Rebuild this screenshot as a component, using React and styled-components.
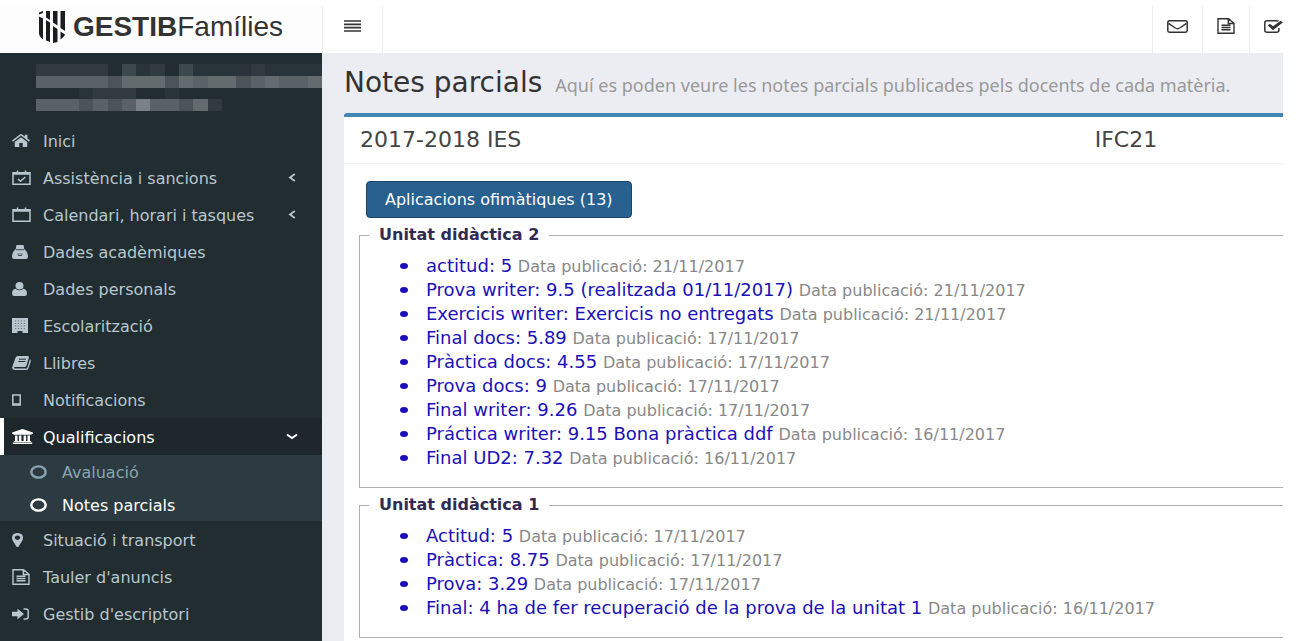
import React from "react";
import styled, { createGlobalStyle } from "styled-components";

const obscuredRows = [
  [2, 2, 2, 2, 2, 0, 3, 1, 2, 0, 3, 1, 1, 1, 1, 2, 1, 1, 1, 1],
  [5, 5, 5, 5, 5, 4, 6, 6, 6, 4, 6, 5, 6, 6, 4, 5, 6, 5, 5, 6],
  [0, 0, 0, 1, 2, 2, 2, 0, 0, 1, 0, 0, 0, 0, 0, 0, 0, 0, 0, 0],
  [5, 5, 5, 4, 5, 4, 5, 7, 5, 5, 4, 6, 2, 0, 0, 0, 0, 0, 0, 0],
];
const shades = [
  "#222d32",
  "#29343a",
  "#303a3f",
  "#3c484d",
  "#4a5459",
  "#596266",
  "#636b6e",
  "#7a8285",
];

const menuItems = [
  { label: "Inici", icon: "home" },
  { label: "Assistència i sancions", icon: "calendarCheck", arrow: "left" },
  { label: "Calendari, horari i tasques", icon: "calendar", arrow: "left" },
  { label: "Dades acadèmiques", icon: "student" },
  { label: "Dades personals", icon: "user" },
  { label: "Escolarització", icon: "building" },
  { label: "Llibres", icon: "book" },
  { label: "Notificacions", icon: "phone" },
  {
    label: "Qualificacions",
    icon: "bank",
    arrow: "down",
    active: true,
    children: [
      { label: "Avaluació" },
      { label: "Notes parcials", active: true },
    ],
  },
  { label: "Situació i transport", icon: "marker" },
  { label: "Tauler d'anuncis", icon: "file" },
  { label: "Gestib d'escriptori", icon: "signIn" },
];

const units = [
  {
    title: "Unitat didàctica 2",
    marks: [
      ["actitud: 5", "21/11/2017"],
      ["Prova writer: 9.5 (realitzada 01/11/2017)", "21/11/2017"],
      ["Exercicis writer: Exercicis no entregats", "21/11/2017"],
      ["Final docs: 5.89", "17/11/2017"],
      ["Pràctica docs: 4.55", "17/11/2017"],
      ["Prova docs: 9", "17/11/2017"],
      ["Final writer: 9.26", "17/11/2017"],
      ["Práctica writer: 9.15 Bona pràctica ddf", "16/11/2017"],
      ["Final UD2: 7.32", "16/11/2017"],
    ],
  },
  {
    title: "Unitat didàctica 1",
    marks: [
      ["Actitud: 5", "17/11/2017"],
      ["Pràctica: 8.75", "17/11/2017"],
      ["Prova: 3.29", "17/11/2017"],
      ["Final: 4 ha de fer recuperació de la prova de la unitat 1", "16/11/2017"],
    ],
  },
];

// each entry: [width, height, drawing]
const icons = {
  home: [
    18,
    13,
    <>
      <path d="M9 3.2 15.3 8v4.2q0 .8-.8.8h-3.8V9H7.3v4H3.5q-.8 0-.8-.8V8z" />
      <path d="M9 0q.6 0 1.100.4L12.800 2.500V.8h2.600v3.700L18 6.600l-.9 1.100L9 1.600.9 7.700 0 6.600 7.900.4Q8.400 0 9 0z" />
    </>,
  ],
  calendarCheck: [
    19,
    15,
    <>
      <path
        d="M1 2.800h17v11.400H1zM1 4h17M5.500.5v3.400M13.500.5v3.400"
        fill="none"
        stroke="currentColor"
        strokeWidth="1.500"
      />
      <path
        d="m6 9 2.500 2.200 4.800-4.200"
        fill="none"
        stroke="currentColor"
        strokeWidth="1.500"
      />
    </>,
  ],
  calendar: [
    19,
    15,
    <path
      d="M1 2.800h17v11.400H1zM1 4h17M5.500.5v3.400M13.500.5v3.400"
      fill="none"
      stroke="currentColor"
      strokeWidth="1.500"
    />,
  ],
  student: [
    16,
    14,
    <>
      <path d="M4.500 0h7l.9 4.400 1 .6q2.600 3 2.600 6.500 0 2.500-2 2.500H2q-2 0-2-2.500Q0 8 2.600 5l1-.6z" />
      <path
        d="M4 4.700h8M5.500 9h2M8.500 9h2M6 10.500h4"
        stroke="#222d32"
        strokeWidth="1"
        opacity=".8"
      />
    </>,
  ],
  user: [
    15,
    14,
    <>
      <ellipse cx="7.500" cy="3.800" rx="4" ry="3.800" />
      <path d="M3.600 6.800q3.900 3 7.800 0Q15 7.500 15 11.500 15 14 12.600 14H2.400Q0 14 0 11.500 0 7.500 3.600 6.800z" />
    </>,
  ],
  building: [
    16,
    15,
    <>
      <path d="M0 0h16v15h-5.500v-2h-5v2H0z" />
      <path
        d="M3 3h10M3 5.500h10M3 8h10M3 10.500h10"
        stroke="#222d32"
        strokeDasharray="1.200 1.700"
        opacity=".5"
      />
    </>,
  ],
  book: [
    19,
    14,
    <>
      <path d="M5.800 0h10q1.400.2 1 1.700l-2.500 8.300q-.4 1-1.600 1H2.800q-1 .2-.8.900.3.700 1.400.7h10.800q.7 0 1-.7L18 3.300q1.200.7.800 1.900l-2.400 7.400q-.5 1.400-2 1.400H3.200Q.4 14 .1 11.500L3.500 1.800Q4.100 0 5.800 0z" />
      <path d="M7 3.200h7M6.300 5.500h7" stroke="#222d32" strokeWidth="1" />
    </>,
  ],
  phone: [
    9,
    12,
    <path
      d="M.8 1h7.400v10H.8zM.8 10h7.400"
      fill="none"
      stroke="currentColor"
      strokeWidth="1.500"
    />,
  ],
  bank: [
    21,
    15,
    <path d="M10.500 0 21 3.500V5h-1.500v.8h-18V5H0V3.500zM3 6.500h2.500V12h1.400V6.500h2.500V12h2.200V6.500h2.500V12h1.400V6.500H18V12h1.200v1H1.800v-1H3zM.8 13.500h19.400V15H.8z" />,
  ],
  marker: [
    11,
    14,
    <path
      d="M5.500 0Q11 .3 11 4.900q0 1.300-.8 2.800L6.600 13.400q-1.100 1-2.200 0L.8 7.700Q0 6.200 0 4.900 0 .3 5.500 0zm0 2.400a2.700 2.300 0 1 0 .01 0z"
      fillRule="evenodd"
    />,
  ],
  file: [
    18,
    16,
    <path
      d="M1 .8h10.500L17 5.300v9.900H1zM11.300.8v4.700H17M4.500 7.200h9M4.500 9.500h9M4.500 11.800h9"
      fill="none"
      stroke="currentColor"
      strokeWidth="1.400"
    />,
  ],
  signIn: [
    17,
    12,
    <>
      <path d="M0 3.700h5.500V.8L12 6l-6.500 5.200V8.300H0z" />
      <path
        d="M11.500 1h2.300q2.400 0 2.400 2v6q0 2-2.400 2h-2.300"
        fill="none"
        stroke="currentColor"
        strokeWidth="1.500"
      />
    </>,
  ],
  circle: [
    17,
    14,
    <ellipse
      cx="8.500"
      cy="7"
      rx="7.200"
      ry="5.600"
      fill="none"
      stroke="currentColor"
      strokeWidth="2.400"
    />,
  ],
  left: [
    8,
    9,
    <path
      d="M6.800 1 2 4.500 6.800 8"
      fill="none"
      stroke="currentColor"
      strokeWidth="1.800"
    />,
  ],
  down: [
    12,
    7,
    <path
      d="m1 1.500 5 3.600 5-3.600"
      fill="none"
      stroke="currentColor"
      strokeWidth="1.800"
    />,
  ],
  bars: [
    17,
    12,
    <path
      d="M0 1h17M0 4.300h17M0 7.600h17M0 11h17"
      stroke="currentColor"
      strokeWidth="1.700"
    />,
  ],
  envelope: [
    21,
    13,
    <>
      <rect
        x=".8"
        y=".8"
        width="19.400"
        height="11.400"
        rx="1.600"
        fill="none"
        stroke="currentColor"
        strokeWidth="1.500"
      />
      <path
        d="m1.500 3.300 6.800 4.700q2.200 1.400 4.400 0l6.800-4.700"
        fill="none"
        stroke="currentColor"
        strokeWidth="1.400"
      />
    </>,
  ],
  check: [
    19,
    13,
    <>
      <path
        d="M14.500 1.300Q14 .8 12.500.8H3.200Q.8.800.8 2.800v7.400q0 2 2.400 2h9.300q2.400 0 2.400-2V8"
        fill="none"
        stroke="currentColor"
        strokeWidth="1.500"
      />
      <path d="m3.800 5.500 2-1.800 3.200 2.600L16.600.8l2.200 1.800-9.800 7.600z" />
    </>,
  ],
};

const Icon = ({ name }) => {
  const [width, height, drawing] = icons[name];
  return (
    <IconSvg
      width={width}
      height={height}
      viewBox={`0 0 ${width} ${height}`}
      aria-hidden="true"
    >
      {drawing}
    </IconSvg>
  );
};

const Logo = () => (
  <svg width="26" height="32" viewBox="0 0 26 32" aria-hidden="true">
    <g fill="#1d1d1f">
      <path d="M0 1.500 4 0v2L0 3.500zM0 5.500l4 2v21q-4-3-4-6.500z" />
      <path d="M7 0h4v9L7 6.500zM7 9l4 2.500V31l-4-1.500z" />
      <path d="M14 0h4.500v14.500L14 11.500zM14 15l4.500 3v13L14 32z" />
      <path d="M21.500 0H26v20l-4.500-3zM21.500 20.500 26 23.500q-.5 2-4.500 5z" />
    </g>
  </svg>
);

const ObscuredName = () => (
  <svg
    width="286"
    height="47"
    viewBox="0 0 20 4"
    preserveAspectRatio="none"
    shapeRendering="crispEdges"
    aria-hidden="true"
  >
    {obscuredRows.map((row, y) =>
      row.map((shade, x) => (
        <rect
          key={`${x}-${y}`}
          x={x}
          y={y}
          width="1"
          height="1"
          fill={shades[shade]}
        />
      ))
    )}
  </svg>
);

const App = () => {
  return (
    <>
      <GlobalStyle />
      <Page>
        <Header>
          <Brand href="#">
            <Logo />
            <BrandName>
              <b>GESTIB</b>Famílies
            </BrandName>
          </Brand>
          <ToggleButton type="button" aria-label="Menú">
            <Icon name="bars" />
          </ToggleButton>
          <HeaderTools>
            <ToolButton type="button" aria-label="Missatges">
              <Icon name="envelope" />
            </ToolButton>
            <ToolButton type="button" aria-label="Documents">
              <Icon name="file" />
            </ToolButton>
            <ToolButton type="button" aria-label="Tasques">
              <Icon name="check" />
            </ToolButton>
          </HeaderTools>
        </Header>
        <Body>
          <Sidebar>
            <UserPanel>
              <ObscuredName />
            </UserPanel>
            <ul>
              {menuItems.map((item) => (
                <li key={item.label}>
                  <MenuLink href="#" $active={item.active}>
                    <IconSlot>
                      <Icon name={item.icon} />
                    </IconSlot>
                    <MenuLabel>{item.label}</MenuLabel>
                    {item.arrow && (
                      <ArrowSlot>
                        <Icon name={item.arrow} />
                      </ArrowSlot>
                    )}
                  </MenuLink>
                  {item.children && (
                    <SubMenu>
                      {item.children.map((child) => (
                        <li key={child.label}>
                          <SubMenuLink href="#" $active={child.active}>
                            <Icon name="circle" />
                            <MenuLabel>{child.label}</MenuLabel>
                          </SubMenuLink>
                        </li>
                      ))}
                    </SubMenu>
                  )}
                </li>
              ))}
            </ul>
          </Sidebar>
          <Content>
            <ContentHeader>
              <PageTitle>Notes parcials</PageTitle>
              <PageSummary>
                Aquí es poden veure les notes parcials publicades pels docents
                de cada matèria.
              </PageSummary>
            </ContentHeader>
            <Box>
              <BoxTitle>
                <School>2017-2018 IES</School>
                <span>IFC21</span>
              </BoxTitle>
              <BoxBody>
                <SubjectButton type="button">
                  Aplicacions ofimàtiques (13)
                </SubjectButton>
                {units.map((unit) => (
                  <Unit key={unit.title}>
                    <UnitTitle>{unit.title}</UnitTitle>
                    <MarkList>
                      {unit.marks.map(([mark, date]) => (
                        <Mark key={mark}>
                          {mark} <MarkDate>Data publicació: {date}</MarkDate>
                        </Mark>
                      ))}
                    </MarkList>
                  </Unit>
                ))}
              </BoxBody>
            </Box>
          </Content>
        </Body>
      </Page>
    </>
  );
};

const GlobalStyle = createGlobalStyle`
  * {
    box-sizing: border-box;
  }

  body {
    margin: 0;
    background-color: #ffffff;
    font-family: "DejaVu Sans", "Noto Sans", sans-serif;
    font-size: 16px;
    line-height: 24px;
  }

  ul {
    margin: 0;
    padding: 0;
    list-style: none;
  }

  a {
    text-decoration: none;
  }
`;

const Page = styled.div`
  display: flex;
  flex-direction: column;
  height: 100vh;
  padding-top: 6px;
  padding-right: 18px;
  overflow: hidden;
`;

const IconSvg = styled.svg`
  display: block;
  flex-shrink: 0;
  fill: currentColor;
`;

const Header = styled.header`
  display: flex;
  flex-shrink: 0;
  height: 47px;
  color: #333333;
`;

const Brand = styled.a`
  display: flex;
  align-items: center;
  justify-content: center;
  gap: 8px;
  width: 322px;
  padding-bottom: 6px;
  background-color: #fdfdfd;
  color: #333333;
`;

const BrandName = styled.span`
  font-family: "Liberation Sans", Arial, sans-serif;
  font-size: 28px;
  line-height: 32px;
`;

const ToggleButton = styled.button`
  width: 61px;
  padding: 0 0 7px 21px;
  border: 1px solid #eeeeee;
  border-width: 0 1px;
  background-color: #ffffff;
  color: #333333;
`;

const HeaderTools = styled.div`
  display: flex;
  margin-left: auto;
`;

const ToolButton = styled.button`
  padding: 0 14px 7px;
  border: 0;
  border-left: 1px solid #eeeeee;
  background-color: #ffffff;
  color: #333333;

  &:last-child {
    padding-right: 0;
  }
`;

const Body = styled.div`
  display: flex;
  flex: 1;
  min-height: 0;
`;

const Sidebar = styled.aside`
  flex-shrink: 0;
  width: 322px;
  background-color: #222d32;
`;

const UserPanel = styled.div`
  height: 69px;
  padding: 11px 0 0 36px;
`;

const MenuLink = styled.a`
  display: flex;
  align-items: center;
  height: 37px;
  padding: 0 24px 0 8px;
  border-left: 4px solid ${(props) => (props.$active ? "#ffffff" : "#222d32")};
  background-color: ${(props) => (props.$active ? "#1e282c" : "#222d32")};
  color: ${(props) => (props.$active ? "#ffffff" : "#b8c7ce")};
`;

const IconSlot = styled.span`
  width: 31px;
`;

const MenuLabel = styled.span`
  flex: 1;
  padding-top: 2px;
`;

const ArrowSlot = styled.span`
  display: flex;
  justify-content: center;
  width: 12px;
`;

const SubMenu = styled.ul`
  background-color: #2c3b41;
`;

const SubMenuLink = styled.a`
  display: flex;
  align-items: center;
  gap: 15px;
  height: 33px;
  padding-left: 30px;
  color: ${(props) => (props.$active ? "#ffffff" : "#8aa4af")};
`;

const Content = styled.main`
  flex: 1;
  display: flex;
  flex-direction: column;
  min-width: 0;
  padding-left: 22px;
  background-color: #ecedf3;
`;

const ContentHeader = styled.div`
  display: flex;
  align-items: baseline;
  gap: 13px;
  padding: 14px 0;
  white-space: nowrap;
`;

const PageTitle = styled.h1`
  margin: 0;
  font-size: 28px;
  font-weight: 400;
  line-height: 32px;
  color: #333333;
`;

const PageSummary = styled.small`
  font-family: "Noto Sans", sans-serif;
  font-size: 18px;
  color: #999999;
`;

const Box = styled.section`
  flex: 1;
  border-top: 4px solid #4088b0;
  border-radius: 3px 0 0 0;
  background-color: #ffffff;
`;

const BoxTitle = styled.h2`
  display: flex;
  margin: 0;
  padding: 11px 16px 11px;
  border-bottom: 1px solid #f4f4f4;
  font-size: 22px;
  font-weight: 400;
  color: #444444;
`;

/* the name of the school is blanked out, only its room is kept */
const School = styled.span`
  flex-basis: 81%;
`;

const BoxBody = styled.div`
  padding: 17px 0 0 15px;
`;

const SubjectButton = styled.button`
  display: block;
  margin: 0 0 5px 7px;
  padding: 6px 18px 5px;
  border: 1px solid #1c4468;
  border-radius: 4px;
  background-color: #286090;
  color: #ffffff;
  font: inherit;
`;

const Unit = styled.fieldset`
  min-width: 0;
  margin: 0 0 5px;
  padding: 7px 0 17px;
  border: 1px solid #b0b0b0;
  border-right: 0;
`;

const UnitTitle = styled.legend`
  margin-left: 9px;
  padding: 0 10px;
  font-weight: 700;
  color: #2f2b55;
`;

const MarkList = styled.ul`
  padding-left: 66px;
  color: #1a10b8;
  font-size: 18px;
`;

const Mark = styled.li`
  height: 24px;
  white-space: nowrap;

  &:before {
    content: "";
    display: inline-block;
    width: 8px;
    height: 6px;
    margin: 0 18px 3px -26px;
    border-radius: 50%;
    background-color: #1a10b8;
  }
`;

const MarkDate = styled.small`
  font-size: 16px;
  color: #888888;
`;

export default App;
